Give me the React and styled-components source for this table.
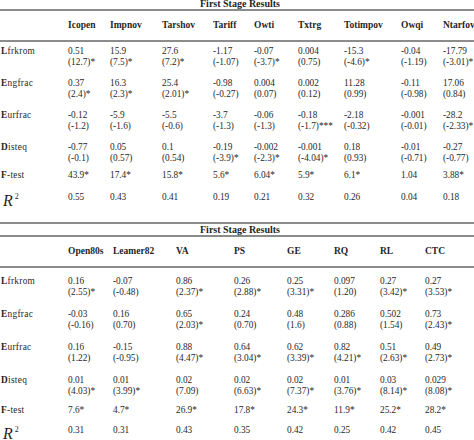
import React from 'react';
import styled, { createGlobalStyle } from 'styled-components';

const Global = createGlobalStyle`
  html, body { margin: 0; padding: 0; background: #fff; }
  body {
    font-family: "Liberation Serif", "Times New Roman", serif;
    color: #1f1f1f;
    width: 474px;
    height: 440px;
    overflow: hidden;
  }
`;

const Page = styled.div`
  display: flex;
  flex-direction: column;
  width: 474px;
`;

const Table = styled.section`
  display: flex;
  flex-direction: column;
`;

const Title = styled.div`
  height: ${p => p.$h}px;
  margin-top: ${p => p.$mt || 0}px;
  line-height: ${p => p.$h}px;
  text-align: center;
  font-weight: bold;
  font-size: 10px;
  padding-left: 6px;
`;

const Rule = styled.div`
  height: 2px;
  background: #8c8c8c;
`;

const Row = styled.div`
  display: grid;
  grid-template-columns: ${p => p.$cols};
  height: ${p => p.$h}px;
  padding-top: ${p => p.$pt || 0}px;
  box-sizing: border-box;
  font-size: 9.3px;
  line-height: 10.5px;
  align-items: ${p => (p.$center ? 'center' : 'start')};
`;

const Head = styled.div`
  font-weight: bold;
  font-size: 9.5px;
  white-space: nowrap;
`;

const Label = styled.div`
  padding-left: 1px;
  white-space: nowrap;
  letter-spacing: 0.3px;
  & > b { font-weight: bold; }
`;

const RLabel = styled.div`
  font-style: italic;
  font-size: 16px;
  line-height: 10px;
  padding-left: 3px;
  & > sup {
    font-style: normal;
    font-size: 8px;
    vertical-align: 7px;
    margin-left: 2px;
  }
`;

const Cell = styled.div`
  display: flex;
  flex-direction: column;
  white-space: nowrap;
`;

const TOP_COLS = '68px 42px 52px 51px 41px 44px 46px 57px 42px minmax(0,1fr)';
const BOT_COLS = '68px 45px 63px 58px 53px 47px 46px 45px minmax(0,1fr)';

const top = {
  heads: ['Icopen', 'Impnov', 'Tarshov', 'Tariff', 'Owti', 'Txtrg', 'Totimpov', 'Owqi', 'Ntarfov'],
  rows: [
    ['Lfrkrom', [['0.51', '(12.7)*'], ['15.9', '(7.5)*'], ['27.6', '(7.2)*'], ['-1.17', '(-1.07)'], ['-0.07', '(-3.7)*'], ['0.004', '(0.75)'], ['-15.3', '(-4.6)*'], ['-0.04', '(-1.19)'], ['-17.79', '(-3.01)*']]],
    ['Engfrac', [['0.37', '(2.4)*'], ['16.3', '(2.3)*'], ['25.4', '(2.01)*'], ['-0.98', '(-0.27)'], ['0.004', '(0.07)'], ['0.002', '(0.12)'], ['11.28', '(0.99)'], ['-0.11', '(-0.98)'], ['17.06', '(0.84)']]],
    ['Eurfrac', [['-0.12', '(-1.2)'], ['-5.9', '(-1.6)'], ['-5.5', '(-0.6)'], ['-3.7', '(-1.3)'], ['-0.06', '(-1.3)'], ['-0.18', '(-1.7)***'], ['-2.18', '(-0.32)'], ['-0.001', '(-0.01)'], ['-28.2', '(-2.33)*']]],
    ['Disteq', [['-0.77', '(-0.1)'], ['0.05', '(0.57)'], ['0.1', '(0.54)'], ['-0.19', '(-3.9)*'], ['-0.002', '(-2.3)*'], ['-0.001', '(-4.04)*'], ['0.18', '(0.93)'], ['-0.01', '(-0.71)'], ['-0.27', '(-0.77)']]],
  ],
  f: ['43.9*', '17.4*', '15.8*', '5.6*', '6.04*', '5.9*', '6.1*', '1.04', '3.88*'],
  r2: ['0.55', '0.43', '0.41', '0.19', '0.21', '0.32', '0.26', '0.04', '0.18'],
};

const bottom = {
  heads: ['Open80s', 'Leamer82', 'VA', 'PS', 'GE', 'RQ', 'RL', 'CTC'],
  rows: [
    ['Lfrkrom', [['0.16', '(2.55)*'], ['-0.07', '(-0.48)'], ['0.86', '(2.37)*'], ['0.26', '(2.88)*'], ['0.25', '(3.31)*'], ['0.097', '(1.20)'], ['0.27', '(3.42)*'], ['0.27', '(3.53)*']]],
    ['Engfrac', [['-0.03', '(-0.16)'], ['0.16', '(0.70)'], ['0.65', '(2.03)*'], ['0.24', '(0.70)'], ['0.48', '(1.6)'], ['0.286', '(0.88)'], ['0.502', '(1.54)'], ['0.73', '(2.43)*']]],
    ['Eurfrac', [['0.16', '(1.22)'], ['-0.15', '(-0.95)'], ['0.88', '(4.47)*'], ['0.64', '(3.04)*'], ['0.62', '(3.39)*'], ['0.82', '(4.21)*'], ['0.51', '(2.63)*'], ['0.49', '(2.73)*']]],
    ['Disteq', [['0.01', '(4.03)*'], ['0.01', '(3.99)*'], ['0.02', '(7.09)'], ['0.02', '(6.63)*'], ['0.02', '(7.37)*'], ['0.01', '(3.76)*'], ['0.03', '(8.14)*'], ['0.029', '(8.08)*']]],
  ],
  f: ['7.6*', '4.7*', '26.9*', '17.8*', '24.3*', '11.9*', '25.2*', '28.2*'],
  r2: ['0.31', '0.31', '0.43', '0.35', '0.42', '0.25', '0.42', '0.45'],
};

const LabelText = ({ text }) => (
  <Label>
    <b>{text[0]}</b>
    {text.slice(1)}
  </Label>
);

function StatsTable({ data, cols, titleMt, titleH, headH, rowHeights, firstPt, fH, r2H }) {
  return (
    <Table>
      <Title $h={titleH} $mt={titleMt}>First Stage Results</Title>
      <Rule />
      <Row $cols={cols} $h={headH} $center>
        <span />
        {data.heads.map(h => (
          <Head key={h}>{h}</Head>
        ))}
      </Row>
      <Rule />
      {data.rows.map(([label, cells], i) => (
        <Row key={label} $cols={cols} $h={rowHeights[i]} $pt={i === 0 ? firstPt : 0}>
          <LabelText text={label} />
          {cells.map(([v, t], j) => (
            <Cell key={j}>
              <span>{v}</span>
              <span>{t}</span>
            </Cell>
          ))}
        </Row>
      ))}
      <Row $cols={cols} $h={fH}>
        <LabelText text="F-test" />
        {data.f.map((v, j) => (
          <Cell key={j}>{v}</Cell>
        ))}
      </Row>
      <Row $cols={cols} $h={r2H}>
        <RLabel>
          R<sup>2</sup>
        </RLabel>
        {data.r2.map((v, j) => (
          <Cell key={j}>{v}</Cell>
        ))}
      </Row>
    </Table>
  );
}

export default function App() {
  return (
    <Page>
      <Global />
      <StatsTable
        data={top}
        cols={TOP_COLS}
        titleMt={-1}
        titleH={10}
        headH={29}
        rowHeights={[36, 32, 32, 28]}
        firstPt={4}
        fH={22}
        r2H={30}
      />
      <Rule />
      <StatsTable
        data={bottom}
        cols={BOT_COLS}
        titleMt={0}
        titleH={11}
        headH={29}
        rowHeights={[41, 33, 33, 30]}
        firstPt={8}
        fH={20}
        r2H={15}
      />
    </Page>
  );
}
